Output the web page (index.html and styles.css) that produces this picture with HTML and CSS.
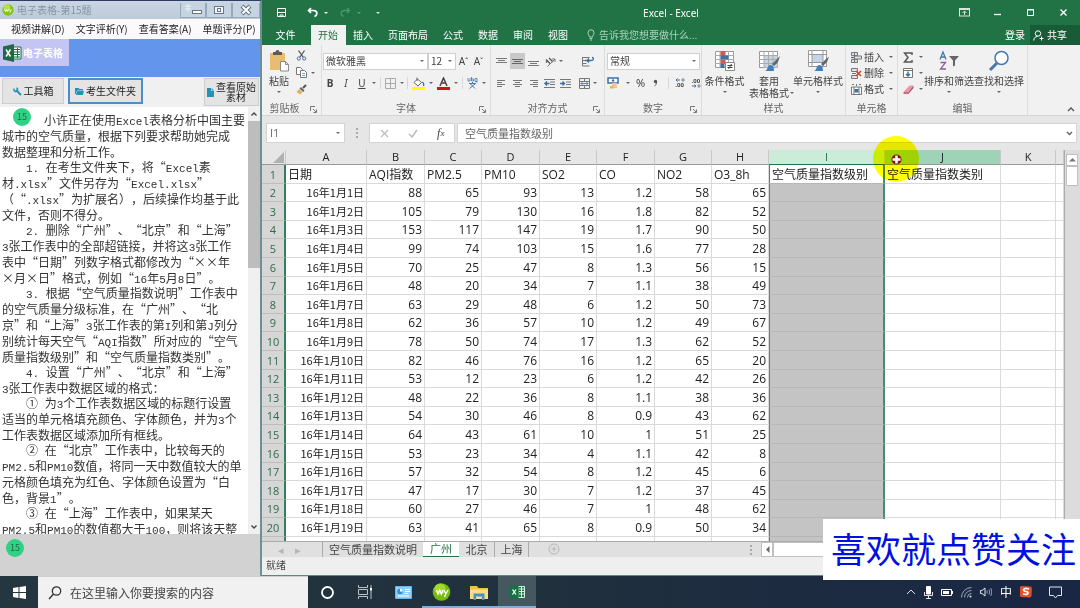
FILE: index.html
```html
<!DOCTYPE html>
<html lang="zh-CN">
<head>
<meta charset="utf-8">
<title>Excel - Excel</title>
<link rel="stylesheet" href="styles.css">
</head>
<body>
<div class="desktop">
  <div class="windows">
    <section class="exam">
      <header class="exam-title">
        <svg class="exam-logo" width="12" height="12" viewBox="0 0 12 12"><circle cx="6" cy="6" r="5.7" fill="#83c31d"/><circle cx="5" cy="4" r="3.4" fill="#b6e04a"/><path d="M2.500 5.500l1 2 1-2 1 2 1-2M7.500 5.500l1 1.800 1-1.800M8.500 7.300l-.6 1.500" stroke="#fff" stroke-width=".8" fill="none"/></svg>
        <span class="exam-name">电子表格-第15题</span>
        <button class="win-btn" aria-label="最小化"><svg width="20" height="12" viewBox="0 0 20 12"><path d="M2 2h6M5 0v8M2 5h6" stroke="#eef3f8" fill="none"/><rect x="9.500" y="6.500" width="9" height="3" fill="#fff" stroke="#667684"/></svg></button>
        <button class="win-btn" aria-label="最大化"><svg width="12" height="12" viewBox="0 0 12 12"><rect x="1.500" y="2.500" width="9" height="7" fill="#f4f7fa" stroke="#667684"/><rect x="4.500" y="4.500" width="3" height="3" fill="none" stroke="#667684"/></svg></button>
        <button class="win-btn win-close" aria-label="关闭"><svg width="12" height="12" viewBox="0 0 12 12"><path d="M2 2l8 8M10 2l-8 8" stroke="#667684" stroke-width="4"/><path d="M2.500 2.500l7 7M9.500 2.500l-7 7" stroke="#fff" stroke-width="2"/></svg></button>
      </header>
      <nav class="exam-menu">
        <button>视频讲解(D)</button><button>文字评析(Y)</button><button>查看答案(A)</button><button>单题评分(P)</button>
      </nav>
      <div class="exam-banner">
        <div class="exam-tab">
          <svg width="19" height="18" viewBox="0 0 19 18"><path d="M10 3h8v12h-8z" fill="#fff" stroke="#1e7145"/><path d="M11 5.500h6M11 8h6M11 10.500h6M11 13h6M14.500 4v10" stroke="#1e7145"/><path d="M0 2.500L11 0v18L0 15.500z" fill="#1e6b41"/><path d="M3 5.500l4.500 7M7.500 5.500l-4.500 7" stroke="#fff" stroke-width="1.500"/></svg>
          <span>电子表格</span>
        </div>
      </div>
      <div class="exam-tools">
        <button class="tool tool-box"><svg width="9" height="9" viewBox="0 0 9 9"><path d="M3 3l5 5" stroke="#2492b5" stroke-width="2"/><path d="M1 1.500v2.200l1.500 1L4.500 3.500V1.500L3.500.7" fill="none" stroke="#2492b5" stroke-width="1.400"/></svg>工具箱</button>
        <button class="tool tool-folder"><svg width="9" height="9" viewBox="0 0 9 9"><path d="M0 1h3.500l1 1H8v1.500H2L.8 7H0z" fill="#2492b5"/><path d="M2.300 4H9L7.800 8H.8z" fill="#2492b5"/></svg>考生文件夹</button>
        <button class="tool tool-raw"><svg width="7" height="9" viewBox="0 0 7 9"><path d="M0 0h4v3h3v6H0z" fill="#2492b5"/><path d="M4.600 0L7 2.400H4.600z" fill="#2492b5"/></svg><span>查看原始<br>素材</span></button>
      </div>
      <div class="exam-body">
        <article class="question">
          <p><span class="badge">15</span>小许正在使用<i>Excel</i>表格分析中国主要<br>城市的空气质量，根据下列要求帮助她完成<br>数据整理和分析工作。</p>
          <p><i>1.&nbsp;</i>在考生文件夹下，将“<i>Excel</i>素<br>材<i>.xlsx</i>”文件另存为“<i>Excel.xlsx</i>”<br>（“<i>.xlsx</i>”为扩展名），后续操作均基于此<br>文件，否则不得分。</p>
          <p><i>2.&nbsp;</i>删除“广州”、“北京”和“上海”<br><i>3</i>张工作表中的全部超链接，并将这<i>3</i>张工作<br>表中“日期”列数字格式都修改为“××年<br>×月×日”格式，例如“<i>16</i>年<i>5</i>月<i>8</i>日”。</p>
          <p><i>3.&nbsp;</i>根据“空气质量指数说明”工作表中<br>的空气质量分级标准，在“广州”、“北<br>京”和“上海”<i>3</i>张工作表的第<i>I</i>列和第<i>J</i>列分<br>别统计每天空气“<i>AQI</i>指数”所对应的“空气<br>质量指数级别”和“空气质量指数类别”。</p>
          <p><i>4.&nbsp;</i>设置“广州”、“北京”和“上海”<br><i>3</i>张工作表中数据区域的格式：</p>
          <p>①<i>&nbsp;</i>为<i>3</i>个工作表数据区域的标题行设置<br>适当的单元格填充颜色、字体颜色，并为<i>3</i>个<br>工作表数据区域添加所有框线。</p>
          <p>②<i>&nbsp;</i>在“北京”工作表中，比较每天的<br><i>PM2.5</i>和<i>PM10</i>数值，将同一天中数值较大的单<br>元格颜色填充为红色、字体颜色设置为“白<br>色，背景<i>1</i>”。</p>
          <p>③<i>&nbsp;</i>在“上海”工作表中，如果某天<br><i>PM2.5</i>和<i>PM10</i>的数值都大于<i>100</i>，则将该天整</p>
        </article>
        <div class="exam-scroll">
          <svg width="8" height="6" viewBox="0 0 8 6"><path d="M1.500 4.500L4 2l2.500 2.500" stroke="#444" stroke-width="1.300" fill="none"/></svg>
          <div class="exam-thumb"></div>
          <svg width="8" height="6" viewBox="0 0 8 6"><path d="M1.500 1.500L4 4l2.500-2.500" stroke="#444" stroke-width="1.300" fill="none"/></svg>
        </div>
      </div>
      <footer class="exam-foot"><span class="badge">15</span></footer>
    </section>

    <section class="excel">
      <header class="title-bar">
        <div class="quick">
          <button aria-label="保存"><svg width="11" height="11" viewBox="0 0 11 11"><path d="M1.500 1.500h8v8h-8z" fill="none" stroke="#fff"/><path d="M1.500 5.500h8M4 9.500V8h3v1.500" stroke="#fff" fill="none"/></svg></button>
          <button aria-label="撤消"><svg width="11" height="11" viewBox="0 0 11 11"><path d="M4 1L1.500 3.500 4 6M1.500 3.500H6.500c4 0 4.500 4.500 1 6" stroke="#fff" stroke-width="1.700" fill="none"/></svg></button>
          <span class="caret"></span>
          <button class="dim" aria-label="恢复"><svg width="11" height="11" viewBox="0 0 11 11"><path d="M7 1l2.500 2.500L7 6M9.500 3.500H4.500C.5 3.500 0 8 3.500 9.500" stroke="#4a966d" stroke-width="1.400" fill="none"/></svg></button>
          <span class="caret dim"></span>
          <span class="caret custom"></span>
        </div>
        <h1>Excel - Excel</h1>
        <div class="win-controls">
          <button aria-label="功能区显示选项"><svg width="11" height="9" viewBox="0 0 11 9"><rect x=".5" y=".5" width="10" height="7.500" fill="none" stroke="#d5e6dc"/><path d="M0 1.500h11M5.500 7V3M3.500 5l2-2 2 2" stroke="#d5e6dc" fill="none"/></svg></button>
          <button aria-label="最小化"><svg width="9" height="9" viewBox="0 0 9 9"><path d="M1 6.500h7" stroke="#fff" stroke-width="1.300"/></svg></button>
          <button aria-label="最大化"><svg width="9" height="9" viewBox="0 0 9 9"><path d="M1.500 1.500h6v6h-6zM1 2h7" fill="none" stroke="#fff"/></svg></button>
          <button aria-label="关闭"><svg width="9" height="9" viewBox="0 0 9 9"><path d="M1.500 1.500l6 6M7.500 1.500l-6 6" stroke="#fff" stroke-width="1.400"/></svg></button>
        </div>
      </header>
      <nav class="tabs">
        <button class="file">文件</button><button class="on">开始</button><button>插入</button><button>页面布局</button><button>公式</button><button>数据</button><button>审阅</button><button>视图</button>
        <button class="tell"><svg width="8" height="12" viewBox="0 0 8 12"><path d="M2.500 8C2.500 6.500 1 6 1 3.800a3 3 0 0 1 6 0C7 6 5.500 6.500 5.500 8zM2.500 9.500h3M3 11h2" fill="none" stroke="#a9d2ba"/></svg>告诉我您想要做什么...</button>
        <button class="login">登录</button>
        <button class="share"><svg width="11" height="11" viewBox="0 0 11 11"><circle cx="5" cy="3.500" r="2.700" fill="none" stroke="#fff"/><path d="M.7 10.500C1 7.500 2.500 6.500 4.500 6.500M6.500 8.500h4M8.500 6.500v4" stroke="#fff" fill="none"/></svg>共享</button>
      </nav>

      <div class="ribbon">
        <div class="group g-clip">
          <div class="g-main">
            <button class="big"><svg width="21" height="22" viewBox="0 0 21 22"><path d="M1 3h15v17H1z" fill="#e8bd72"/><path d="M4 2h2.500a2 2 0 0 1 4 0H13v3H4z" fill="#5b5b5b"/><path d="M11.500 11.500h5l3 3v6.500h-8z" fill="#fff" stroke="#8a8a8a"/><path d="M16.500 11.500v3h3" fill="none" stroke="#8a8a8a"/></svg>粘贴<span class="caret"></span></button>
            <div class="stack">
              <button aria-label="剪切"><svg width="11" height="11" viewBox="0 0 11 11"><path d="M2.500.5L7 7M8.500.5L4 7" stroke="#555" stroke-width="1.300"/><circle cx="2.800" cy="8.500" r="1.600" fill="none" stroke="#3c6fa5"/><circle cx="8.200" cy="8.500" r="1.600" fill="none" stroke="#3c6fa5"/></svg></button>
              <button aria-label="复制"><svg width="11" height="11" viewBox="0 0 11 11"><path d="M.5.5h4l2 2v5h-6z" fill="#fff" stroke="#777"/><path d="M4.500 3.500h4l2 2v5h-6z" fill="#fff" stroke="#777"/><path d="M6 6.500h3M6 8.500h3" stroke="#7f9fc0"/></svg><span class="caret"></span></button>
              <button aria-label="格式刷"><svg width="11" height="11" viewBox="0 0 11 11"><path d="M10 1L7 4" stroke="#555" stroke-width="2"/><path d="M5 3l3.500 3.500L7 8 3.500 4.500z" fill="#666"/><path d="M3 5l3.500 3.500L4 10.500.5 8z" fill="#e4ad62"/></svg></button>
            </div>
          </div>
          <div class="g-label">剪贴板<svg class="launch" width="7" height="7" viewBox="0 0 7 7"><path d="M.5 5V.5H5M3 3l3 3M6.500 3.500v3h-3" fill="none" stroke="#777"/></svg></div>
        </div>

        <div class="group g-font">
          <div class="row combos">
            <label class="combo c-name"><select aria-label="字体"><option>微软雅黑</option></select></label>
            <label class="combo c-size"><select aria-label="字号"><option>12</option></select></label>
            <button class="grow" aria-label="增大字号">A<sup>ˆ</sup></button><button class="grow" aria-label="减小字号">A<sup>ˇ</sup></button>
          </div>
          <div class="row marks">
            <button class="letter"><b>B</b></button><button class="letter"><em>I</em></button><button class="letter"><u>U</u></button><span class="caret"></span><span class="sep"></span>
            <button aria-label="边框"><svg width="11" height="11" viewBox="0 0 11 11"><path d="M.5.5h10v10H.5zM5.500 0v11M0 5.500h11" fill="none" stroke="#aaa"/></svg></button><span class="caret"></span><span class="sep"></span>
            <button aria-label="填充颜色"><svg width="13" height="13" viewBox="0 0 13 13"><path d="M5.500 2l4 3.500L6 9 2 5.500z" fill="#fff" stroke="#666"/><path d="M5 4V.5" stroke="#666"/><path d="M10 5c2 1 2 2.500 1.500 4" stroke="#3c6fa5" stroke-width="1.300" fill="none"/><path d="M0 10h13v3H0z" fill="#ff0"/></svg></button><span class="caret"></span>
            <button aria-label="字体颜色"><svg width="13" height="13" viewBox="0 0 13 13"><path d="M3 9l3.500-8L10 9M4.300 6h4.400" stroke="#444" stroke-width="1.500" fill="none"/><path d="M0 10h13v3H0z" fill="#d0121b"/></svg></button><span class="caret"></span><span class="sep"></span>
            <button aria-label="拼音"><svg width="11" height="12" viewBox="0 0 11 12"><path d="M1 1v3h2V1M4.500 0v4h2V2h-2M8 1.500h2v3H8zM10 4v1.500" stroke="#4678ad" fill="none" stroke-width=".8"/><path d="M5.500 5v1.500M2 6.500h7M3.500 7l4.500 4.500M8 7l-5.500 4.500" stroke="#4678ad" fill="none"/></svg></button><span class="caret"></span>
          </div>
          <div class="g-label">字体<svg class="launch" width="7" height="7" viewBox="0 0 7 7"><path d="M.5 5V.5H5M3 3l3 3M6.500 3.500v3h-3" fill="none" stroke="#777"/></svg></div>
        </div>

        <div class="group g-align">
          <div class="row">
            <button aria-label="顶端对齐"><svg width="11" height="11" viewBox="0 0 11 11"><path d="M0 2.500h11M2 4.500h7M0 6.500h11" stroke="#777"/></svg></button>
            <button class="pressed" aria-label="垂直居中"><svg width="11" height="11" viewBox="0 0 11 11"><path d="M0 3.500h11M2 5.500h7M0 7.500h11" stroke="#666"/></svg></button>
            <button aria-label="底端对齐"><svg width="11" height="11" viewBox="0 0 11 11"><path d="M0 5.500h11M2 7.500h7M0 9.500h11" stroke="#777"/></svg></button>
            <button class="wide" aria-label="方向"><svg width="11" height="11" viewBox="0 0 11 11"><path d="M1 3.500l4 4M1 6.500l2-2M4 2l4 4" stroke="#555" stroke-width="1.300"/><path d="M2.500 10.500L10 3M10 6V3H7" stroke="#777" fill="none"/></svg><span class="caret"></span></button>
            <button class="far" aria-label="自动换行"><svg width="12" height="11" viewBox="0 0 12 11"><path d="M.5 1.500h7M.5 4.500h4M.5 7.500h4M.5 10h7M.5 1v9" stroke="#777" fill="none"/><path d="M3 4.500h6c3 0 3-3 1-3M7 6.500l-2-2 2-2" stroke="#3c6fa5" fill="none" stroke-width="1.300"/></svg></button>
          </div>
          <div class="row">
            <button aria-label="左对齐"><svg width="11" height="11" viewBox="0 0 11 11"><path d="M1 2.500h8M1 4.500h5M1 6.500h8M1 8.500h5" stroke="#777"/></svg></button>
            <button aria-label="居中"><svg width="11" height="11" viewBox="0 0 11 11"><path d="M1 2.500h9M3 4.500h5M1 6.500h9M3 8.500h5" stroke="#777"/></svg></button>
            <button aria-label="右对齐"><svg width="11" height="11" viewBox="0 0 11 11"><path d="M2 2.500h8M5 4.500h5M2 6.500h8M5 8.500h5" stroke="#777"/></svg></button>
            <button aria-label="减少缩进"><svg width="11" height="11" viewBox="0 0 11 11"><path d="M0 1.500h11M6 4h5M6 6.500h5M0 9.500h11" stroke="#777"/><path d="M5.500 5.500H1M3 3.500l-2 2 2 2" stroke="#3c6fa5" stroke-width="1.400" fill="none"/></svg></button>
            <button aria-label="增加缩进"><svg width="11" height="11" viewBox="0 0 11 11"><path d="M0 1.500h11M6 4h5M6 6.500h5M0 9.500h11" stroke="#777"/><path d="M0 5.500h4.500M2.500 3.500l2 2-2 2" stroke="#3c6fa5" stroke-width="1.400" fill="none"/></svg></button>
            <button class="wide merge" aria-label="合并后居中"><svg width="11" height="11" viewBox="0 0 11 11"><path d="M.5.5h10v10H.5zM.5 3.500h10M.5 7.500h10M5.500 0v3M5.500 8v3" fill="none" stroke="#777"/><path d="M2 5.500h7M3.500 4L2 5.500 3.500 7M7.500 4L9 5.500 7.500 7" stroke="#3c6fa5" fill="none" stroke-width=".8"/></svg><span class="caret"></span></button>
          </div>
          <div class="g-label">对齐方式<svg class="launch" width="7" height="7" viewBox="0 0 7 7"><path d="M.5 5V.5H5M3 3l3 3M6.500 3.500v3h-3" fill="none" stroke="#777"/></svg></div>
        </div>

        <div class="group g-num">
          <div class="row combos"><label class="combo c-fmt"><select aria-label="数字格式"><option>常规</option></select></label></div>
          <div class="row">
            <button aria-label="会计数字格式"><svg width="13" height="12" viewBox="0 0 13 12"><path d="M1 1h10v5H1z" fill="#fff" stroke="#3c6fa5" stroke-width="1.500"/><circle cx="6" cy="3.500" r="1.200" fill="#3c6fa5"/><path d="M5 6h5v5H5z" fill="#edc893"/><path d="M3 9h4v2.500H3z" fill="#e4b478"/></svg></button><span class="caret"></span>
            <button class="pct">%</button><button class="comma" aria-label="千位分隔样式"><svg width="5" height="8" viewBox="0 0 5 8"><circle cx="2.500" cy="2.500" r="1.700" fill="#555"/><path d="M3.500 2.500C3.500 5 3 6 1.500 7" stroke="#555" fill="none"/></svg></button><span class="sep"></span>
            <button class="dec" aria-label="增加小数位数"><svg width="10" height="4" viewBox="0 0 10 4"><path d="M5 2H1M2.500.5L1 2l1.500 1.500" stroke="#3c6fa5" fill="none"/><circle cx="8" cy="2" r="1.200" fill="none" stroke="#666" stroke-width=".8"/></svg><span>.00</span></button>
            <button class="dec" aria-label="减少小数位数"><span>.00</span><svg width="10" height="4" viewBox="0 0 10 4"><path d="M1 2h4M3.500.5L5 2 3.500 3.500" stroke="#3c6fa5" fill="none"/><circle cx="8" cy="2" r="1.200" fill="none" stroke="#666" stroke-width=".8"/></svg></button>
          </div>
          <div class="g-label">数字<svg class="launch" width="7" height="7" viewBox="0 0 7 7"><path d="M.5 5V.5H5M3 3l3 3M6.500 3.500v3h-3" fill="none" stroke="#777"/></svg></div>
        </div>

        <div class="group g-style">
          <div class="g-main">
            <button class="big"><svg width="22" height="22" viewBox="0 0 22 22"><path d="M1.500 1.500h18v16h-18z" fill="#fff" stroke="#999"/><path d="M1 5.500h19M1 9.500h19M1 13.500h19M6 1v17M14.500 1v17" stroke="#aaa"/><path d="M6.500 1h5v5h-5zM6.500 10h5v4h-5z" fill="#cf5a4d"/><path d="M6.500 5.500h8v4h-8zM6.500 14h4v4h-4z" fill="#3f6fa3"/><path d="M11.500 12.500h9v8h-9z" fill="#fff" stroke="#888"/><path d="M13.500 15.500h5M13.500 17.500h5M17.500 14l-3 5" stroke="#444"/></svg>条件格式<span class="caret"></span></button>
            <button class="big"><svg width="23" height="22" viewBox="0 0 23 22"><path d="M1.500 1.500h18v16h-18z" fill="#fff" stroke="#999"/><path d="M6 5.500h13.500v12H6z" fill="#c4d5e8"/><path d="M1 5.500h19M1 9.500h19M1 13.500h19M6 1v17M10.500 1v17M15 1v17" stroke="#aaa"/><path d="M22 6l-2 6-4 4-2-2 5-5z" fill="#666"/><path d="M12 15c3 0 4 2 4 6H7c3-1 2-5 5-6z" fill="#3f7fbf"/></svg>套用<br>表格格式 <span class="caret side"></span></button>
            <button class="big"><svg width="23" height="22" viewBox="0 0 23 22"><path d="M1.500.5h18v16h-18z" fill="#fff" stroke="#999"/><path d="M5 4.500h11v8H5z" fill="#c4d5e8"/><path d="M1 4.500h19M1 12.500h19M5 0v17M16 0v17" stroke="#999" fill="none"/><path d="M22 7l-2 5-4 4-2-2 5-5z" fill="#666"/><path d="M12 15c3 0 4 2 4 6H7c3-1 2-5 5-6z" fill="#3f7fbf"/></svg>单元格样式<span class="caret"></span></button>
          </div>
          <div class="g-label">样式</div>
        </div>

        <div class="group g-cells">
          <div class="list">
            <button><svg width="11" height="11" viewBox="0 0 11 11"><path d="M.5.5h6v3h-6zM.5 7.500h6v3h-6zM3.500 0v3M3.500 8v3M3.500 4h7v3h-7z" fill="#e3e3e3" stroke="#777"/><path d="M3 5.500H0" stroke="#3c6fa5" stroke-width="1.300"/></svg>插入<span class="caret"></span></button>
            <button><svg width="11" height="11" viewBox="0 0 11 11"><path d="M.5.5h6v3h-6zM.5 7.500h6v3h-6zM1 5.500h4" fill="#e3e3e3" stroke="#777"/><path d="M5 3l5 5M10 3L5 8" stroke="#c8452f" stroke-width="1.600"/></svg>删除<span class="caret"></span></button>
            <button><svg width="11" height="11" viewBox="0 0 11 11"><path d="M1 .5h2M8 .5h2M.5 3h10v7.500H.5zM5.500 0v2" fill="#fff" stroke="#777"/><path d="M3 3v8M8 3v8" stroke="#777"/><path d="M3.500 5h4v3.500h-4z" fill="#3c6fa5"/></svg>格式<span class="caret"></span></button>
          </div>
          <div class="g-label">单元格</div>
        </div>

        <div class="group g-edit">
          <div class="g-main">
            <div class="list">
              <button aria-label="自动求和"><svg width="11" height="11" viewBox="0 0 11 11"><path d="M9 3V1H1.500L5 5.500 1.500 10H9V8" fill="none" stroke="#555" stroke-width="1.500"/></svg><span class="caret"></span></button>
              <button aria-label="填充"><svg width="11" height="11" viewBox="0 0 11 11"><path d="M.5.500h9v9h-9zM.5 2.500h9" fill="#fff" stroke="#777"/><path d="M5 3.500V8M3 6l2 2 2-2" stroke="#3c6fa5" stroke-width="1.500" fill="none"/></svg><span class="caret"></span></button>
              <button aria-label="清除"><svg width="11" height="11" viewBox="0 0 11 11"><path d="M6.500 1.500h4L5.500 8h-5z" fill="#e59aa8"/><path d="M.5 8h5v2h-5z" fill="#d0657b"/><path d="M5.500 8l5-6.500v2.500L5.500 10z" fill="#b84f68"/></svg><span class="caret"></span></button>
            </div>
            <button class="big"><svg width="22" height="22" viewBox="0 0 22 22"><path d="M2 9.500L5 2l3 7.500M3 7h4" stroke="#4678ad" stroke-width="1.300" fill="none"/><path d="M2.500 12.500h5l-5 6.500h5.500" stroke="#8d5ba5" stroke-width="1.300" fill="none"/><path d="M11 6h10l-4 4.500v5l-2 1v-6z" fill="#666"/></svg>排序和筛选<span class="caret"></span></button>
            <button class="big"><svg width="22" height="22" viewBox="0 0 22 22"><circle cx="13.500" cy="8" r="6.500" fill="#fff" stroke="#4678ad" stroke-width="1.500"/><path d="M9 13l-7 7" stroke="#4678ad" stroke-width="3"/></svg>查找和选择<span class="caret"></span></button>
          </div>
          <div class="g-label">编辑</div>
        </div>
        <button class="collapse" aria-label="折叠功能区"><svg width="8" height="6" viewBox="0 0 8 6"><path d="M1 5l3-3 3 3" stroke="#555" stroke-width="1.400" fill="none"/></svg></button>
      </div>

      <div class="formula">
        <label class="namebox"><input aria-label="名称框" value="I1"><span class="caret"></span></label>
        <span class="dots"></span>
        <div class="fx">
          <button aria-label="取消"><svg width="9" height="9" viewBox="0 0 9 9"><path d="M1 1l7 7M8 1L1 8" stroke="#bbb" stroke-width="1.200"/></svg></button>
          <button aria-label="输入"><svg width="10" height="9" viewBox="0 0 10 9"><path d="M1 5l3 3 5-7" stroke="#bbb" stroke-width="1.500" fill="none"/></svg></button>
          <button class="fn" aria-label="插入函数">f<sub>x</sub></button>
        </div>
        <label class="fbar"><input aria-label="编辑栏" value="空气质量指数级别"><svg width="7" height="5" viewBox="0 0 7 5"><path d="M1 1l2.500 2.500L6 1" stroke="#666" stroke-width="1.500" fill="none"/></svg></label>
      </div>

      <div class="sheet">
        <div class="cells">
          <table>
            <colgroup><col class="w-row"><col class="w-date"><col class="w-n"><col class="w-n1"><col class="w-n"><col class="w-n1"><col class="w-n"><col class="w-n1"><col class="w-n1"><col class="w-text"><col class="w-text"><col class="w-k"><col></colgroup>
            <thead><tr><th class="corner"><svg width="11" height="11" viewBox="0 0 11 11"><path d="M11 0v11H0z" fill="#b1b1b1"/></svg></th><th>A</th><th>B</th><th>C</th><th>D</th><th>E</th><th>F</th><th>G</th><th>H</th><th class="sel">I</th><th class="hover">J</th><th>K</th><th></th></tr></thead>
            <tbody id="rows"></tbody>
          </table>
        </div>
        <div class="vscroll">
          <button aria-label="向上滚动"><svg width="7" height="5" viewBox="0 0 7 5"><path d="M0 4.500L3.500 1 7 4.500z" fill="#777"/></svg></button>
          <div class="vthumb"></div>
        </div>
        <div class="pointer"></div>
        <svg class="cross" width="11" height="11" viewBox="0 0 11 11"><circle cx="5.500" cy="5.500" r="5" fill="#7c1511"/><path d="M5.500 1.500v8M1.500 5.500h8" stroke="#fff" stroke-width="2.600"/></svg>
      </div>

      <div class="sheet-tabs">
        <span class="nav-arrow">◂</span><span class="nav-arrow">▸</span>
        <button class="first">空气质量指数说明</button><button class="active">广州</button><button>北京</button><button class="line">上海</button>
        <button class="add" aria-label="新工作表"><svg width="12" height="12" viewBox="0 0 12 12"><circle cx="6" cy="6" r="5" fill="none" stroke="#b5b5b5"/><path d="M6 3.500v5M3.500 6h5" stroke="#b5b5b5"/></svg></button>
        <span class="dots"></span>
        <div class="hscroll"><button aria-label="向左滚动"><svg width="5" height="7" viewBox="0 0 5 7"><path d="M4.500 0L1 3.500 4.500 7z" fill="#666"/></svg></button><div class="hthumb"></div></div>
      </div>
      <footer class="status">就绪</footer>
    </section>
  </div>

  <div class="caption">喜欢就点赞关注</div>

  <footer class="taskbar">
    <button class="start" aria-label="开始"><svg width="13" height="13" viewBox="0 0 13 13"><path d="M0 2l5.500-1v5H0zM6.500.9L13 0v6H6.500zM0 7h5.500v5L0 11zM6.500 7H13v6l-6.500-.9z" fill="#fff"/></svg></button>
    <label class="search"><svg width="14" height="14" viewBox="0 0 14 14"><circle cx="8.500" cy="5" r="4.200" fill="none" stroke="#333" stroke-width="1.300"/><path d="M5.500 8L1 13" stroke="#333" stroke-width="1.400"/></svg><input aria-label="搜索" placeholder="在这里输入你要搜索的内容"></label>
    <button class="task" aria-label="Cortana"><svg width="15" height="15" viewBox="0 0 15 15"><circle cx="7.500" cy="7.500" r="5.500" fill="none" stroke="#fff" stroke-width="1.800"/></svg></button>
    <button class="task" aria-label="任务视图"><svg width="15" height="14" viewBox="0 0 15 14"><path d="M.5 0v2.500h9V0M.5 14v-2.500h9V14M.5 4.500h9v5h-9zM13 0v14" fill="none" stroke="#b9c3ca"/><path d="M12 3h2v2.500h-2z" fill="#fff"/></svg></button>
    <button class="task" aria-label="控制面板"><svg width="17" height="13" viewBox="0 0 17 13"><rect width="17" height="13" rx="1" fill="#69b8ec"/><rect x="1" y="1" width="15" height="11" fill="#8fd0f7"/><circle cx="5" cy="5.500" r="2.800" fill="#3290d8"/><path d="M5 5.500V2.700a2.800 2.800 0 0 1 2.800 2.800z" fill="#fff"/><path d="M10 3.500h5M10 5.500h5M10 7.500h3M3 10h11" stroke="#fff"/></svg></button>
    <button class="task run" aria-label="wy"><svg width="19" height="18" viewBox="0 0 19 18"><circle cx="9.500" cy="9" r="8.800" fill="#75bd0b"/><circle cx="8" cy="6" r="5.500" fill="#a3d92a"/><path d="M4.500 7l1.500 4 1.700-4 1.700 4 1.500-4M12 7l1.800 4L16 7M13.800 11l-1.300 3" stroke="#fff" stroke-width="1.400" fill="none"/></svg></button>
    <button class="task run" aria-label="文件资源管理器"><svg width="18" height="15" viewBox="0 0 18 15"><path d="M0 1h7l1.500 2H18v11H0z" fill="#f0bf4c"/><path d="M0 4.500h18V14H0z" fill="#fbdc84"/><path d="M3.500 15V8.500h11V15H12v-3.500H6V15z" fill="#4593c8"/></svg></button>
    <button class="task run current" aria-label="Excel"><svg width="15" height="14" viewBox="0 0 15 14"><path d="M8 1.500h6.500v11H8z" fill="#1e7145" stroke="#d9efe3"/><path d="M9 4h5M9 6.500h5M9 9h5M11.500 2v10" stroke="#d9efe3"/><path d="M0 1.500L8.500 0v14L0 12.500z" fill="#14733f"/><path d="M2.500 4.500l3.500 5M6 4.500l-3.500 5" stroke="#fff" stroke-width="1.300"/></svg></button>
    <div class="tray">
      <svg width="10" height="8" viewBox="0 0 10 8"><path d="M1 6l4-4 4 4" stroke="#dfe5ea" fill="none"/></svg>
      <svg width="9" height="13" viewBox="0 0 9 13"><rect x="2" y="0" width="5" height="8.500" rx="1" fill="#fff"/><path d="M.5 6v3.500h8V6M4.500 9.500V12M2 12.500h5" stroke="#dfe5ea" fill="none"/></svg>
      <svg width="12" height="9" viewBox="0 0 12 9"><path d="M.5 1.500h10v6H.5z" fill="none" stroke="#fff"/><path d="M2 3h6v3H2zM11 3h1v3h-1z" fill="#fff"/></svg>
      <svg width="11" height="11" viewBox="0 0 11 11"><path d="M.5 10.500a10 10 0 0 1 10-10M3.500 10.500a7 7 0 0 1 7-7M6.500 10.500a4 4 0 0 1 4-4" stroke="#9ba8b5" fill="none"/><circle cx="9.500" cy="9.500" r="1" fill="#dfe5ea"/></svg>
      <svg width="12" height="10" viewBox="0 0 12 10"><path d="M.5 3.500H2L5 1v8L2 6.500H.5z" fill="none" stroke="#dfe5ea"/><path d="M7 3.500v3M9 2.500q1.300 2.500 0 5M10.800 1q2 4 0 8" stroke="#93a1b0" fill="none"/></svg>
      <span class="ime">中</span>
      <svg width="12" height="12" viewBox="0 0 12 12"><rect width="12" height="11" rx="2" transform="rotate(3)" fill="#e2512d"/><path d="M9 3Q4 1.500 3.500 3.800 4 5.500 7 5.800 9 6.500 7.500 8 5.500 9 3 7.800" stroke="#fff" stroke-width="1.600" fill="none"/></svg>
      <svg class="note" width="13" height="13" viewBox="0 0 13 13"><path d="M.5 1h12v8.500H8.500L6.500 12 4.500 9.500h-4z" fill="none" stroke="#dfe5ea"/></svg>
    </div>
  </footer>
</div>
<script src="script.js"></script>
</body>
</html>
```
FILE: styles.css
```css
* { box-sizing: border-box; }
body {
  margin: 0;
  font-family: "Noto Sans CJK SC", sans-serif;
  font-size: 10px;
  line-height: 14px;
  color: #333;
}
button, input, select { font: inherit; color: inherit; margin: 0; padding: 0; border: 0; background: none; }
button { display: inline-flex; align-items: center; justify-content: center; white-space: nowrap; }
svg { display: block; flex: none; }
.desktop { position: relative; height: 100vh; display: flex; flex-direction: column; overflow: hidden; background: #fff; }
.windows { flex: 1; min-height: 0; display: flex; }
.caret { width: 0; height: 0; flex: none; border: 2px solid transparent; border-top-color: #666; border-bottom: 0; }
.sep { width: 1px; height: 12px; background: #d8d8d8; flex: none; }

/* exam window */
.exam { width: 262px; flex: none; display: flex; flex-direction: column; background: #f0f0f0; border-top: 1px solid #2e3c66; border-right: 2px solid #6f8f96; overflow: hidden; }
.exam-title { height: 18px; flex: none; display: flex; align-items: center; background: linear-gradient(#cbd6e3, #bccad9); }
.exam-logo { margin: 0 3px 0 2px; }
.exam-name { flex: 1; color: #8694a3; }
.win-btn { width: 26px; height: 15px; border: 1px solid #98a8b8; border-top: 0; background: #c6d3e1; }
.win-close { width: 28px; }
.exam-menu { height: 20px; flex: none; display: flex; gap: 11px; padding-left: 11px; background: #fafafa; color: #222; }
.exam-banner { height: 38px; flex: none; background: #6495ed; }
.exam-tab { width: 69px; height: 27px; display: flex; align-items: center; gap: 1px; padding-left: 3px; background: #c5c5f4; color: #fff; font-weight: 700; }
.exam-tools { height: 30px; flex: none; display: flex; align-items: flex-start; gap: 4px; padding: 1px 1px 0 2px; }
.tool { height: 26px; gap: 2px; background: #e4e4e4; border: 1px solid #cdcdcd; color: #222; }
.tool-box { width: 62px; }
.tool-folder { width: 75px; border: 2px solid #4b8ec9; }
.tool-raw { width: 55px; height: 28px; margin-left: auto; line-height: 10px; }
.exam-body { flex: 1; min-height: 0; display: flex; background: #fff; }
.question { flex: 1; min-width: 0; overflow: hidden; padding: 5px 0 0 2px; font-size: 12px; line-height: 16px; white-space: nowrap; text-spacing-trim: space-all; color: #333; }
.question p { margin: 0 0 -1px; text-indent: 24px; }
.question p:first-child { text-indent: 11px; }
.question i { font-family: "Liberation Mono", monospace; font-style: normal; font-size: 11px; line-height: 1; }
.badge { display: inline-block; width: 18px; height: 18px; margin: -4px 13px 0 0; border-radius: 50%; background: #2fd184; color: #246b4b; font-size: 9px; line-height: 18px; text-align: center; text-indent: 0; vertical-align: top; }
.exam-scroll { width: 12px; display: flex; flex-direction: column; align-items: center; padding: 4px 0; background: #f0f0f0; }
.exam-scroll svg:last-child { margin-top: auto; }
.exam-thumb { width: 12px; height: 147px; margin-top: 4px; background: #bdbdbd; }
.exam-foot { height: 42px; flex: none; padding: 9px 6px; background: #d2d2d2; }

/* excel window */
.excel { flex: 1; min-width: 0; display: flex; flex-direction: column; background: #e6e6e6; border-bottom: 1px solid #5b8a75; }
.title-bar { height: 25px; flex: none; display: grid; grid-template-columns: 1fr auto 1fr; align-items: center; background: #217346; color: #fff; }
.title-bar h1 { margin: 0; font: 400 10px/14px "Noto Sans", sans-serif; }
.quick { display: flex; align-items: center; padding-left: 14px; }
.quick button { width: 11px; }
.quick .caret { border-top-color: #fff; margin: 0 12px 0 6px; }
.quick button:nth-child(2) { margin-left: 20px; }
.quick .caret.dim { border-top-color: #5aa27b; }
.quick .caret.custom { border-top-color: #cfe5d8; margin-left: 3px; }
.win-controls { display: flex; justify-content: flex-end; }
.win-controls button { width: 33px; height: 24px; }
.tabs { height: 20px; flex: none; display: flex; background: #217346; color: #fff; }
.tabs button { padding: 0 8px 0 7px; }
.tabs .file { width: 49px; padding: 0 2px 0 0; }
.tabs .on { background: #f1f1f1; color: #217346; }
.tabs .tell { gap: 4px; margin-left: 4px; color: #a9d2ba; }
.tabs .login { margin-left: auto; padding: 0 5px; }
.tabs .share { width: 50px; gap: 3px; padding: 0 10px 0 0; background: #185c37; }

.ribbon { height: 71px; flex: none; display: flex; background: #f1f1f1; border-bottom: 1px solid #d4d4d4; }
.group { display: flex; flex-direction: column; flex: none; border-right: 1px solid #dcdcdc; padding-top: 5px; color: #444; }
.g-clip { width: 60px; } .g-font { width: 169px; } .g-align { width: 114px; } .g-num { width: 97px; } .g-style { width: 144px; } .g-cells { width: 52px; } .g-edit { width: 130px; }
.g-main { flex: 1; display: flex; }
.g-label { position: relative; margin-top: auto; height: 14px; line-height: 14px; text-align: center; color: #666; }
.g-clip .g-label { padding-right: 14px; }
.launch { position: absolute; right: 4px; top: 5px; }
.big { flex-direction: column; justify-content: flex-start; line-height: 12px; align-items: center; }
.big svg { margin-bottom: 3px; }
.big .caret { margin-top: 4px; }
.big .side { display: inline-block; margin: -7px 0 0 46px; }
.g-clip .big { width: 34px; }
.stack { display: flex; flex-direction: column; align-items: flex-start; gap: 6px; }
.stack button { gap: 4px; }
.row { height: 22px; display: flex; align-items: center; padding-left: 2px; }
.combos { align-items: center; padding-left: 1px; }
.combo { position: relative; display: flex; height: 17px; background: #fff; border: 1px solid #cfcfcf; }
.combo select { width: 100%; appearance: none; padding-left: 2px; line-height: 14px; outline: 0; }
.combo::after { content: ""; position: absolute; right: 3px; top: 6px; border: 2px solid transparent; border-top-color: #666; border-bottom: 0; }
.c-name { width: 105px; }
.c-size { width: 28px; }
.c-fmt { width: 93px; }
.grow { width: 15px; font-family: "Noto Sans", sans-serif; align-items: baseline; }
.grow sup { font-size: 8px; line-height: 8px; }
.marks { justify-content: space-between; padding: 0 4px 0 2px; font-family: "Noto Sans", sans-serif; }
.letter { width: 12px; }
.g-align .row { padding-left: 3px; }
.g-align .row button { width: 15px; height: 16px; margin-right: 1px; }
.g-align .row .pressed { background: #c9c9c9; }
.g-align .row .wide { width: 20px; gap: 3px; margin-left: 2px; }
.g-align .row .far { margin-left: 15px; }
.g-align .row .merge { margin-left: 4px; }
.g-num .row { gap: 6px; }
.g-num .combos { padding-left: 2px; }
.g-num .sep { margin-left: 2px; }
.pct { font-family: "Noto Sans", sans-serif; font-size: 11px; }
.comma { width: 9px; }
.dec { flex-direction: column; width: 11px; font: 700 6px/6px "Noto Sans", sans-serif; }
.g-style .g-main { gap: 1px; padding-left: 2px; }
.g-style .big:nth-child(1) { width: 41px; }
.g-style .big:nth-child(2) { width: 46px; }
.g-style .big:nth-child(3) { width: 50px; }
.list { display: flex; flex-direction: column; align-items: flex-start; gap: 2px; padding-left: 5px; }
.list button { height: 14px; gap: 2px; }
.list .caret { margin-left: 3px; }
.g-edit .list { width: 26px; }
.collapse { margin: auto 5px 3px auto; }

.formula { height: 34px; flex: none; display: flex; align-items: center; padding: 0 3px 0 4px; font-size: 11px; color: #666; }
.namebox, .fx, .fbar { height: 20px; display: flex; align-items: center; background: #fff; border: 1px solid #d4d4d4; }
.namebox { width: 79px; padding: 0 4px 0 3px; }
.namebox input { flex: 1; min-width: 0; font-family: "Open Sans", sans-serif; }
.dots { width: 2px; height: 10px; margin: 0 11px; flex: none; background: repeating-linear-gradient(#aaa 0 2px, transparent 2px 4px); }
.fx { width: 86px; justify-content: space-around; }
.fn { font: italic 12px/14px "Liberation Serif", serif; color: #444; }
.fn sub { font-size: 9px; }
.fbar { flex: 1; margin-left: 2px; padding: 0 3px 0 7px; }
.fbar input { flex: 1; min-width: 0; }

.sheet { position: relative; flex: 1; min-height: 0; display: flex; }
.cells { flex: 1; min-width: 0; overflow: hidden; border-right: 1px solid #ababab; }
table { width: 100%; table-layout: fixed; border-collapse: separate; border-spacing: 0; background: #fff; color: #222; }
.w-row { width: 24px; } .w-date { width: 81px; } .w-n { width: 58px; } .w-n1 { width: 57px; } .w-text { width: 116px; } .w-k { width: 55px; }
th, td { padding: 0; overflow: hidden; white-space: nowrap; }
thead th { height: 15px; background: #e6e6e6; border-right: 1px solid #c9c9c9; border-bottom: 1px solid #9a9a9a; font: 400 11px/14px "Open Sans", sans-serif; }
thead .sel { background: #caecd9; color: #217346; border-bottom: 1px solid #217346; }
thead .hover { background: #9fd3b8; }
.corner svg { margin: 1px 1px 0 auto; }
tbody tr { height: 19px; }
tbody tr:nth-child(5n+2), tbody tr:nth-child(5n+4) { height: 18px; }
tbody th { background: #d6d6d6; color: #2e6b4c; border-right: 2px solid #33805a; border-bottom: 1px solid #bdbdbd; font: 400 11px/17px "Open Sans", sans-serif; }
td { border-right: 1px solid #dadada; border-bottom: 1px solid #dadada; padding: 0 2px; text-align: right; font: 400 12px/17px "Open Sans", "Noto Sans CJK SC", sans-serif; }
td.date { font: 400 11px/17px "Noto Sans CJK SC", sans-serif; }
.heads td { text-align: left; }
td.picked { background: #c4c4c4; border-right: 2px solid #4a8a70; border-left: 1px solid #4a8a70; border-bottom-color: #b7b7b7; }
.heads td.picked { background: #fff; }
.vscroll { width: 15px; flex: none; padding: 1px 2px 0 1px; background: #dcdcdc; }
.vscroll button { width: 12px; height: 12px; background: #fff; border: 1px solid #c0c0c0; }
.vthumb { width: 12px; height: 20px; background: #fff; border: 1px solid #c0c0c0; }
.pointer { position: absolute; left: 611px; top: -14px; width: 46px; height: 46px; border-radius: 50%; background: #ff0; mix-blend-mode: multiply; }
.cross { position: absolute; left: 629px; top: 4px; }

.sheet-tabs { height: 16px; flex: none; display: flex; align-items: stretch; background: #e0e0e0; border-top: 1px solid #ababab; font-size: 11px; line-height: 14px; color: #444; }
.nav-arrow { width: 17px; text-align: center; color: #b5b5b5; }
.nav-arrow:first-child { margin-left: 10px; }
.sheet-tabs button { width: 35px; padding-bottom: 2px; }
.sheet-tabs .first { width: 101px; margin-left: 16px; border-left: 1px solid #ababab; }
.sheet-tabs .active { width: 36px; background: #fff; color: #217346; border-bottom: 1px solid #217346; }
.sheet-tabs .line { border: solid #ababab; border-width: 0 1px; }
.sheet-tabs .add { width: 12px; margin-left: 19px; }
.sheet-tabs .dots { margin: 3px 9px 0 auto; }
.hscroll { width: 319px; display: flex; }
.sheet-tabs .hscroll button { width: 12px; padding: 0; background: #fff; border: 1px solid #c0c0c0; }
.hthumb { width: 180px; background: #fff; border: 1px solid #c0c0c0; }
.status { height: 18px; flex: none; padding: 1px 4px; background: #efefef; color: #444; }

.caption { position: absolute; right: 0; bottom: 28px; z-index: 2; padding: 4px 4px 7px 8px; background: #fff; color: #0010e0; font-size: 35px; line-height: 50px; white-space: nowrap; }

/* taskbar */
.taskbar { height: 32px; flex: none; display: flex; align-items: stretch; background: linear-gradient(90deg, #24363f, #20303d 50%, #192644); color: #fff; }
.start { width: 38px; }
.search { width: 270px; display: flex; align-items: center; gap: 8px; padding-left: 10px; background: #f1f1f1; border-top: 1px solid #cfcfcf; font-size: 12px; color: #444; }
.search input { flex: 1; min-width: 0; }
.search input::placeholder { color: #444; opacity: 1; }
.task { width: 38px; padding-top: 2px; border-bottom: 2px solid transparent; }
.task.run { border-bottom-color: #76b0e0; }
.task.current { background: #46585f; }
.tray { margin-left: auto; display: flex; align-items: center; gap: 8px; padding-right: 18px; }
.ime { font-size: 12px; line-height: 14px; }
.note { margin-left: 9px; }
```
FILE: script.js
```js
const readings = [
  [88, 65, 93, 13, 1.2, 58, 65],
  [105, 79, 130, 16, 1.8, 82, 52],
  [153, 117, 147, 19, 1.7, 90, 50],
  [99, 74, 103, 15, 1.6, 77, 28],
  [70, 25, 47, 8, 1.3, 56, 15],
  [48, 20, 34, 7, 1.1, 38, 49],
  [63, 29, 48, 6, 1.2, 50, 73],
  [62, 36, 57, 10, 1.2, 49, 67],
  [78, 50, 74, 17, 1.3, 62, 52],
  [82, 46, 76, 16, 1.2, 65, 20],
  [53, 12, 23, 6, 1.2, 42, 26],
  [48, 22, 36, 8, 1.1, 38, 36],
  [54, 30, 46, 8, 0.9, 43, 62],
  [64, 43, 61, 10, 1, 51, 25],
  [53, 23, 34, 4, 1.1, 42, 8],
  [57, 32, 54, 8, 1.2, 45, 6],
  [47, 17, 30, 7, 1.2, 37, 45],
  [60, 27, 46, 7, 1, 48, 62],
  [63, 41, 65, 8, 0.9, 50, 34],
  [63, 43, 71, 8, 1, 50, 44]
];
const titles = ["日期", "AQI指数", "PM2.5", "PM10", "SO2", "CO", "NO2", "O3_8h", "空气质量指数级别", "空气质量指数类别", "", ""];
const body = document.getElementById("rows");

function addRow(number, values, className) {
  const row = body.insertRow();
  if (className) row.className = className;
  const head = document.createElement("th");
  head.textContent = number;
  row.append(head);
  values.forEach((value, i) => {
    const cell = row.insertCell();
    cell.textContent = value;
    if (i === 8) cell.className = "picked";
    else if (i === 0 && !className) cell.className = "date";
  });
}

addRow(1, titles, "heads");
readings.forEach((values, i) => {
  addRow(i + 2, [`16年1月${i + 1}日`, ...values, "", "", "", ""]);
});
```
